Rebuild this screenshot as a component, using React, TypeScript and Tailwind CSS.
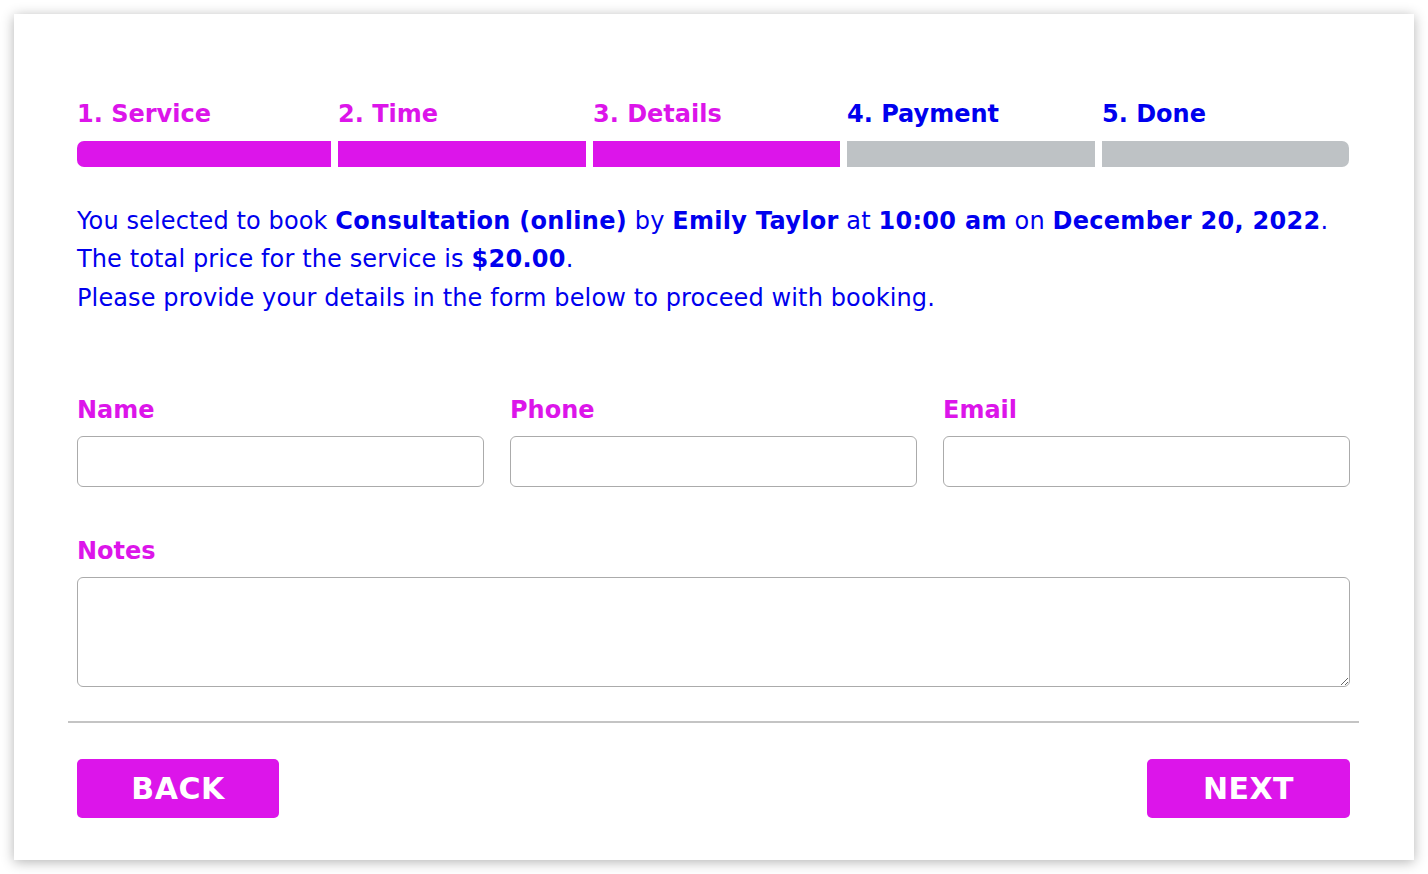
import React from "react";

const MAGENTA = "text-[#dc15ea]";

interface Step {
  label: string;
  width: string;
  done: boolean;
  rounded?: string;
}

const steps: Step[] = [
  { label: "1. Service", width: "w-[254px]", done: true, rounded: "rounded-l-[7px]" },
  { label: "2. Time", width: "w-[248px]", done: true },
  { label: "3. Details", width: "w-[247px]", done: true },
  { label: "4. Payment", width: "w-[248px]", done: false },
  { label: "5. Done", width: "w-[247px]", done: false, rounded: "rounded-r-[7px]" },
];

const Field: React.FC<{ label: string }> = ({ label }) => (
  <div className="flex flex-col">
    <label className={`${MAGENTA} text-[24px] font-bold leading-[30px]`}>{label}</label>
    <input
      type="text"
      className="mt-[11px] h-[51px] w-full rounded-[6px] border-[1.5px] border-[#ababab] bg-white px-3 outline-none"
    />
  </div>
);

export default function App() {
  return (
    <div className="min-h-screen bg-white p-[14px] font-['DejaVu_Sans',sans-serif]">
      <div className="flex h-[846px] w-[1400px] flex-col bg-white pl-[63px] pr-[64px] pt-[85px] shadow-[0_2px_12px_rgba(0,0,0,0.3)]">
        {/* progress steps */}
        <div className="flex gap-[7px]">
          {steps.map((s) => (
            <div key={s.label} className={`flex flex-col ${s.width}`}>
              <span
                className={`text-[24px] font-bold leading-[30px] ${s.done ? MAGENTA : "text-[#0000ee]"}`}
              >
                {s.label}
              </span>
              <div
                className={`mt-[12px] h-[26px] ${s.done ? "bg-[#dc15ea]" : "bg-[#bec2c5]"} ${s.rounded ?? ""}`}
              />
            </div>
          ))}
        </div>

        {/* summary */}
        <div className="mt-[35px] text-[24px] leading-[38.4px] tracking-[0.12px] text-[#0000ee] [&_b]:tracking-[0.3px]">
          <p>
            You selected to book <b>Consultation (online)</b> by <b>Emily Taylor</b> at{" "}
            <b>10:00 am</b> on <b>December 20, 2022</b>.
          </p>
          <p>
            The total price for the service is <b>$20.00</b>.
          </p>
          <p>Please provide your details in the form below to proceed with booking.</p>
        </div>

        {/* form */}
        <div className="mt-[78px] grid grid-cols-3 gap-[26px]">
          <Field label="Name" />
          <Field label="Phone" />
          <Field label="Email" />
        </div>

        <div className="mt-[49px] flex flex-col">
          <label className={`${MAGENTA} text-[24px] font-bold leading-[30px]`}>Notes</label>
          <textarea className="mt-[11px] h-[110px] w-full rounded-[6px] border-[1.5px] border-[#ababab] bg-white px-3 py-2 outline-none" />
        </div>

        <hr className="-mx-[9px] mt-[34px] border-t-[2px] border-[#c4c4c4]" />

        <div className="mt-[36px] flex justify-between">
          <button className="h-[59px] w-[202px] rounded-[5px] bg-[#dc15ea] text-[30px] font-bold tracking-[0.5px] text-white">
            BACK
          </button>
          <button className="h-[59px] w-[203px] rounded-[5px] bg-[#dc15ea] text-[30px] font-bold tracking-[0.5px] text-white">
            NEXT
          </button>
        </div>
      </div>
    </div>
  );
}
